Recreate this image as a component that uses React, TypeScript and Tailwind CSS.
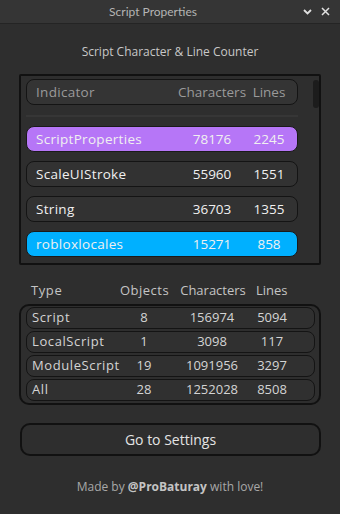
const listRows = [
  { name: 'ScriptProperties', chars: '78176', lines: '2245', bg: 'bg-[#b676f7] border-[#1a1a1a]' },
  { name: 'ScaleUIStroke', chars: '55960', lines: '1551', bg: 'bg-[#323232] border-[#141414]' },
  { name: 'String', chars: '36703', lines: '1355', bg: 'bg-[#323232] border-[#141414]' },
  { name: 'robloxlocales', chars: '15271', lines: '858', bg: 'bg-[#00b0ff] border-[#1a1a1a]' },
]

const typeRows = [
  { type: 'Script', objects: '8', chars: '156974', lines: '5094' },
  { type: 'LocalScript', objects: '1', chars: '3098', lines: '117' },
  { type: 'ModuleScript', objects: '19', chars: '1091956', lines: '3297' },
  { type: 'All', objects: '28', chars: '1252028', lines: '8508' },
]

function TitleBar() {
  return (
    <div className="relative h-[24px] bg-[#353535] border-b border-[#242424] flex items-center justify-center pr-[34px]">
      <span className="text-[12px] text-[#b4b4b4] font-['Lato',sans-serif]">Script Properties</span>
      <div className="absolute right-[10px] top-0 h-full flex items-center gap-[9px]">
        <svg width="9" height="6" viewBox="0 0 9 6">
          <path d="M1 1 L4.5 4.5 L8 1" stroke="#e0e0e0" strokeWidth="1.8" fill="none" />
        </svg>
        <svg width="9" height="9" viewBox="0 0 9 9">
          <path d="M1 1 L8 8 M8 1 L1 8" stroke="#e0e0e0" strokeWidth="1.5" fill="none" />
        </svg>
      </div>
    </div>
  )
}

export default function App() {
  return (
    <div className="w-[340px] h-[514px] bg-[#2e2e2e] flex flex-col font-['Open_Sans',sans-serif] overflow-hidden">
      <TitleBar />
      <div className="flex flex-col px-[19px]">
        <div className="pt-[19px] h-[50px] text-center text-[12px] text-[#c8c8c8]">
          Script Character &amp; Line Counter
        </div>

        <div className="h-[191px] border-2 border-[#111] rounded-[2px] flex pl-[5px] pt-[3px]">
          <div className="w-[273px] flex flex-col">
            <div className="h-[26px] rounded-[8px] border border-[#141414] bg-[#343434] flex items-center text-[13.5px] text-[#9a9a9a]">
              <span className="pl-[9px] flex-1 tracking-[0.3px]">Indicator</span>
              <span className="w-[72px] text-center">Characters</span>
              <span className="w-[49px] text-center pr-[7px]">Lines</span>
            </div>
            <div className="mt-[10px] h-[2px] bg-[#363636]" />
            <div className="mt-[9px] flex flex-col gap-[9px]">
              {listRows.map((r) => (
                <div
                  key={r.name}
                  className={`h-[26px] rounded-[8px] border flex items-center text-[13.5px] text-[#f0f0f0] ${r.bg}`}
                >
                  <span className="pl-[9px] flex-1 tracking-[0.3px]">{r.name}</span>
                  <span className="w-[72px] text-center">{r.chars}</span>
                  <span className="w-[49px] text-center pr-[7px]">{r.lines}</span>
                </div>
              ))}
            </div>
          </div>
          <div className="ml-[15px] mt-[1px] w-[6px] h-[28px] rounded-[3px] bg-[#1c1c1c]" />
        </div>

        <div className="mt-[15px] h-[22px] flex items-center text-[13px] text-[#c4c4c4] pl-[12px]">
          <span className="w-[88px] tracking-[0.6px]">Type</span>
          <span className="w-[51px] text-center tracking-[0.5px]">Objects</span>
          <span className="w-[86px] text-center">Characters</span>
          <span className="w-[30px] text-center">Lines</span>
        </div>

        <div className="mt-[2px] border-2 border-[#111] rounded-[10px] p-[1px] pl-[5px] pr-[4px] pb-[2px] flex flex-col gap-[2px]">
          {typeRows.map((r) => (
            <div
              key={r.type}
              className="h-[22px] rounded-[8px] border border-[#141414] bg-[#303030] flex items-center text-[13px] text-[#d4d4d4]"
            >
              <span className="pl-[5px] w-[94px] tracking-[0.6px]">{r.type}</span>
              <span className="w-[46px] text-center">{r.objects}</span>
              <span className="w-[90px] text-center">{r.chars}</span>
              <span className="w-[30px] text-center">{r.lines}</span>
            </div>
          ))}
        </div>

        <div className="mt-[18px] h-[33px] ml-[1px] border-2 border-[#111] rounded-[10px] flex items-center justify-center text-[14px] text-[#e4e4e4]">
          Go to Settings
        </div>

        <div className="mt-[22px] text-center text-[12px] text-[#a8a8a8]">
          Made by <span className="font-bold text-[#c4c4c4]">@ProBaturay</span> with love!
        </div>
      </div>
    </div>
  )
}
